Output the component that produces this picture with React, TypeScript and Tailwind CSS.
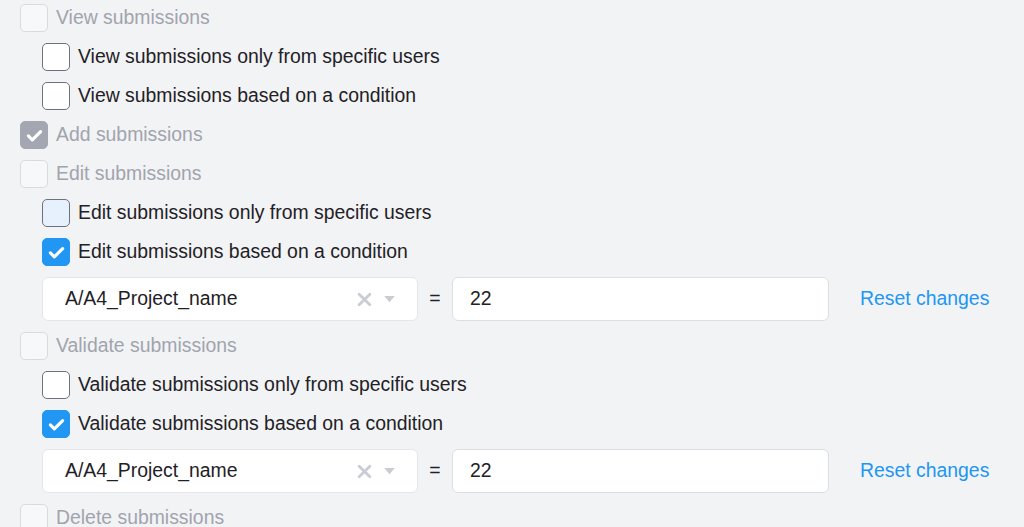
import React from "react"

type BoxState = "off" | "on" | "disabled" | "disabledOn" | "hover"

function Check({ state }: { state: BoxState }) {
  const base = "flex h-7 w-7 shrink-0 items-center justify-center rounded-[5px] border"
  const styles: Record<BoxState, string> = {
    off: "border-[#6e717c] bg-white",
    hover: "border-[#6e717c] bg-[#e6f1fd]",
    on: "border-[#2196f3] bg-[#2196f3]",
    disabled: "border-[#d9dbe1] bg-[#f7f8fa]",
    disabledOn: "border-[#a4a7b1] bg-[#a4a7b1]",
  }
  const checked = state === "on" || state === "disabledOn"
  return (
    <span className={`${base} ${styles[state]}`}>
      {checked && (
        <svg viewBox="0 0 24 24" className="h-[21px] w-[21px]" fill="none" stroke="white" strokeWidth="3.6" strokeLinecap="round" strokeLinejoin="round">
          <path d="M5 12.5l4.5 4.5L19 7.5" />
        </svg>
      )}
    </span>
  )
}

function Row({ label, state, nested }: { label: string; state: BoxState; nested?: boolean }) {
  const disabled = state === "disabled" || state === "disabledOn"
  return (
    <div className={`flex h-7 items-center gap-2 ${nested ? "pl-[42px]" : "pl-5"}`}>
      <Check state={state} />
      <span className={disabled ? "text-[#a1a4ad]" : "text-[#1f2126]"}>{label}</span>
    </div>
  )
}

function ConditionRow() {
  return (
    <div className="flex h-[44px] items-center pl-[42px]">
      <div className="flex h-[44px] w-[376px] items-center rounded-md border border-[#e4e6eb] bg-white pl-[22px] pr-[22px]">
        <span className="flex-1 text-[#1f2126]">A/A4_Project_name</span>
        <svg viewBox="0 0 14 14" className="mr-[12px] h-[15px] w-[15px]" stroke="#c9ccd3" strokeWidth="2.6" strokeLinecap="round">
          <path d="M2 2l10 10M12 2L2 12" />
        </svg>
        <svg viewBox="0 0 12 8" className="h-[7px] w-[11px]" fill="#c9ccd3">
          <path d="M0 0h12L6 7z" />
        </svg>
      </div>
      <span className="w-[34px] text-center text-[#1f2126]">=</span>
      <div className="flex h-[44px] w-[377px] items-center rounded-md border border-[#dcdee3] bg-white pl-[17px] text-[#1f2126]">
        22
      </div>
      <span className="ml-[31px] text-[#2196f3]">Reset changes</span>
    </div>
  )
}

export default function App() {
  return (
    <div className="h-[527px] w-[1024px] overflow-hidden bg-[#f2f3f5] pt-[4px] text-[19.4px] font-['Liberation_Sans',Arial,sans-serif]">
      <div className="flex flex-col gap-[11px]">
        <Row label="View submissions" state="disabled" />
        <Row label="View submissions only from specific users" state="off" nested />
        <Row label="View submissions based on a condition" state="off" nested />
        <Row label="Add submissions" state="disabledOn" />
        <Row label="Edit submissions" state="disabled" />
        <Row label="Edit submissions only from specific users" state="hover" nested />
        <Row label="Edit submissions based on a condition" state="on" nested />
        <ConditionRow />
        <Row label="Validate submissions" state="disabled" />
        <Row label="Validate submissions only from specific users" state="off" nested />
        <Row label="Validate submissions based on a condition" state="on" nested />
        <ConditionRow />
        <Row label="Delete submissions" state="disabled" />
      </div>
    </div>
  )
}
